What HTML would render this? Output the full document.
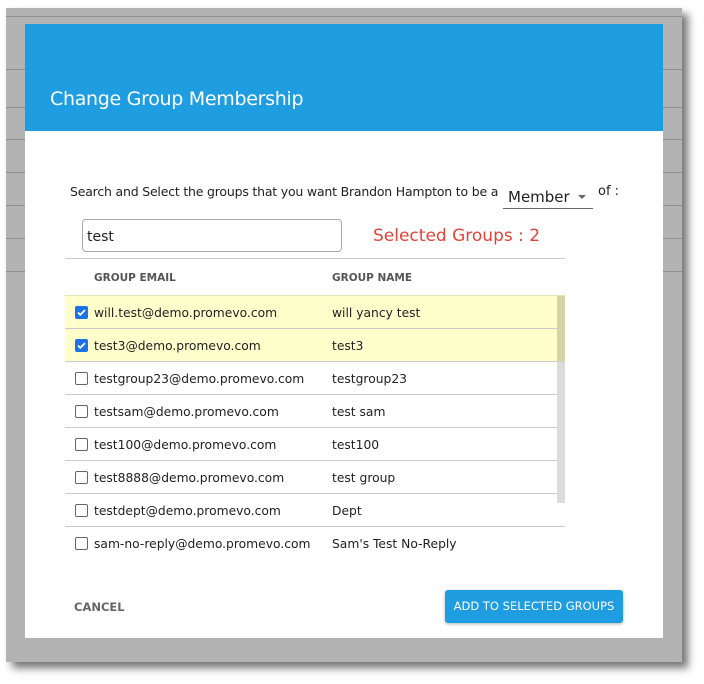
<!DOCTYPE html>
<html><head><style>
*{margin:0;padding:0;box-sizing:border-box}
body{width:704px;height:684px;background:#fff;position:relative;overflow:hidden;font-family:"DejaVu Sans","Liberation Sans",sans-serif}
.frame{position:absolute;left:6px;top:8px;width:676px;height:654px;background:#b3b3b3;box-shadow:6px 6px 8px rgba(0,0,0,.55)}
.hl{position:absolute;left:0;width:676px;height:1px;background:#8e8e8e}
.dlg{position:absolute;left:25px;top:24px;width:638px;height:614px;background:#fff}
.hdr{height:107px;background:#1e9de0;color:#fff;font-size:19px;padding:64px 0 0 25px;letter-spacing:-0.3px}
.t{position:absolute;font-size:13px;color:#222;white-space:nowrap}
.row{position:absolute;left:40px;width:500px;height:33px;border-bottom:1px solid #ccc;font-size:12.3px;color:#222}
.row span{position:absolute;top:10px;white-space:nowrap}
.cb{position:absolute;left:10px;top:10px;width:13px;height:13px;border:1px solid #666;border-radius:2px;background:#fff}
.cb.on{background:#1a73e8;border-color:#1a73e8}
</style></head><body>
<div class="frame">
<div class="hl" style="top:8px"></div><div class="hl" style="top:61px"></div><div class="hl" style="top:99px"></div><div class="hl" style="top:131px"></div><div class="hl" style="top:164px"></div><div class="hl" style="top:197px"></div><div class="hl" style="top:230px"></div><div class="hl" style="top:263px"></div>
</div>
<div class="dlg">
<div class="hdr">Change Group Membership</div>
<div class="t" style="left:45px;top:160px;font-size:12.5px;letter-spacing:-0.2px">Search and Select the groups that you want Brandon Hampton to be a</div>
<div class="t" style="left:483px;top:164px;font-size:15px;">Member</div>
<div style="position:absolute;left:553px;top:171px;border:4px solid transparent;border-top:4px solid #666"></div>
<div style="position:absolute;left:478px;top:184px;width:90px;height:1px;background:#666"></div>
<div class="t" style="left:573px;top:160px">of :</div>
<div style="position:absolute;left:57px;top:195px;width:260px;height:33px;border:1px solid #aaa;border-radius:4px"></div>
<div class="t" style="left:62px;top:205px;font-size:14px">test</div>
<div class="t" style="left:348px;top:202px;font-size:17px;color:#e0443a">Selected Groups : 2</div>
<div style="position:absolute;left:40px;top:234px;width:500px;height:1px;background:#ccc"></div>
<div class="t" style="left:69px;top:248px;font-size:10.5px;font-weight:bold;color:#555">GROUP EMAIL</div>
<div class="t" style="left:307px;top:248px;font-size:10.5px;font-weight:bold;color:#555">GROUP NAME</div>
<div style="position:absolute;left:40px;top:271px;width:500px;height:1px;background:#e8e4b0"></div>
<div class="row" style="top:272px;background:#ffffcc;height:33px"><div class="cb on"><svg width="11" height="11" viewBox="0 0 11 11"><path d="M2 5.5l2.3 2.3L9 3" stroke="#fff" stroke-width="1.8" fill="none"/></svg></div><span style="left:29px">will.test@demo.promevo.com</span><span style="left:267px">will yancy test</span></div>
<div class="row" style="top:305px;background:#ffffcc"><div class="cb on"><svg width="11" height="11" viewBox="0 0 11 11"><path d="M2 5.5l2.3 2.3L9 3" stroke="#fff" stroke-width="1.8" fill="none"/></svg></div><span style="left:29px">test3@demo.promevo.com</span><span style="left:267px">test3</span></div>
<div class="row" style="top:338px"><div class="cb"></div><span style="left:29px">testgroup23@demo.promevo.com</span><span style="left:267px">testgroup23</span></div>
<div class="row" style="top:371px"><div class="cb"></div><span style="left:29px">testsam@demo.promevo.com</span><span style="left:267px">test sam</span></div>
<div class="row" style="top:404px"><div class="cb"></div><span style="left:29px">test100@demo.promevo.com</span><span style="left:267px">test100</span></div>
<div class="row" style="top:437px"><div class="cb"></div><span style="left:29px">test8888@demo.promevo.com</span><span style="left:267px">test group</span></div>
<div class="row" style="top:470px"><div class="cb"></div><span style="left:29px">testdept@demo.promevo.com</span><span style="left:267px">Dept</span></div>
<div class="row" style="top:503px;border-bottom:none"><div class="cb"></div><span style="left:29px">sam-no-reply@demo.promevo.com</span><span style="left:267px">Sam's Test No-Reply</span></div>
<div style="position:absolute;left:532px;top:272px;width:8px;height:207px;background:#dcdcdc"></div>
<div style="position:absolute;left:532px;top:272px;width:8px;height:66px;background:#d6d3a8"></div>
<div class="t" style="left:49px;top:576px;font-size:11.5px;font-weight:bold;color:#666">CANCEL</div>
<div style="position:absolute;left:420px;top:566px;width:178px;height:33px;background:#1e9de0;border-radius:3px;box-shadow:0 1px 3px rgba(0,0,0,.3);color:#fff;font-size:11.5px;text-align:center;line-height:33px">ADD TO SELECTED GROUPS</div>
</div>
</body></html>
